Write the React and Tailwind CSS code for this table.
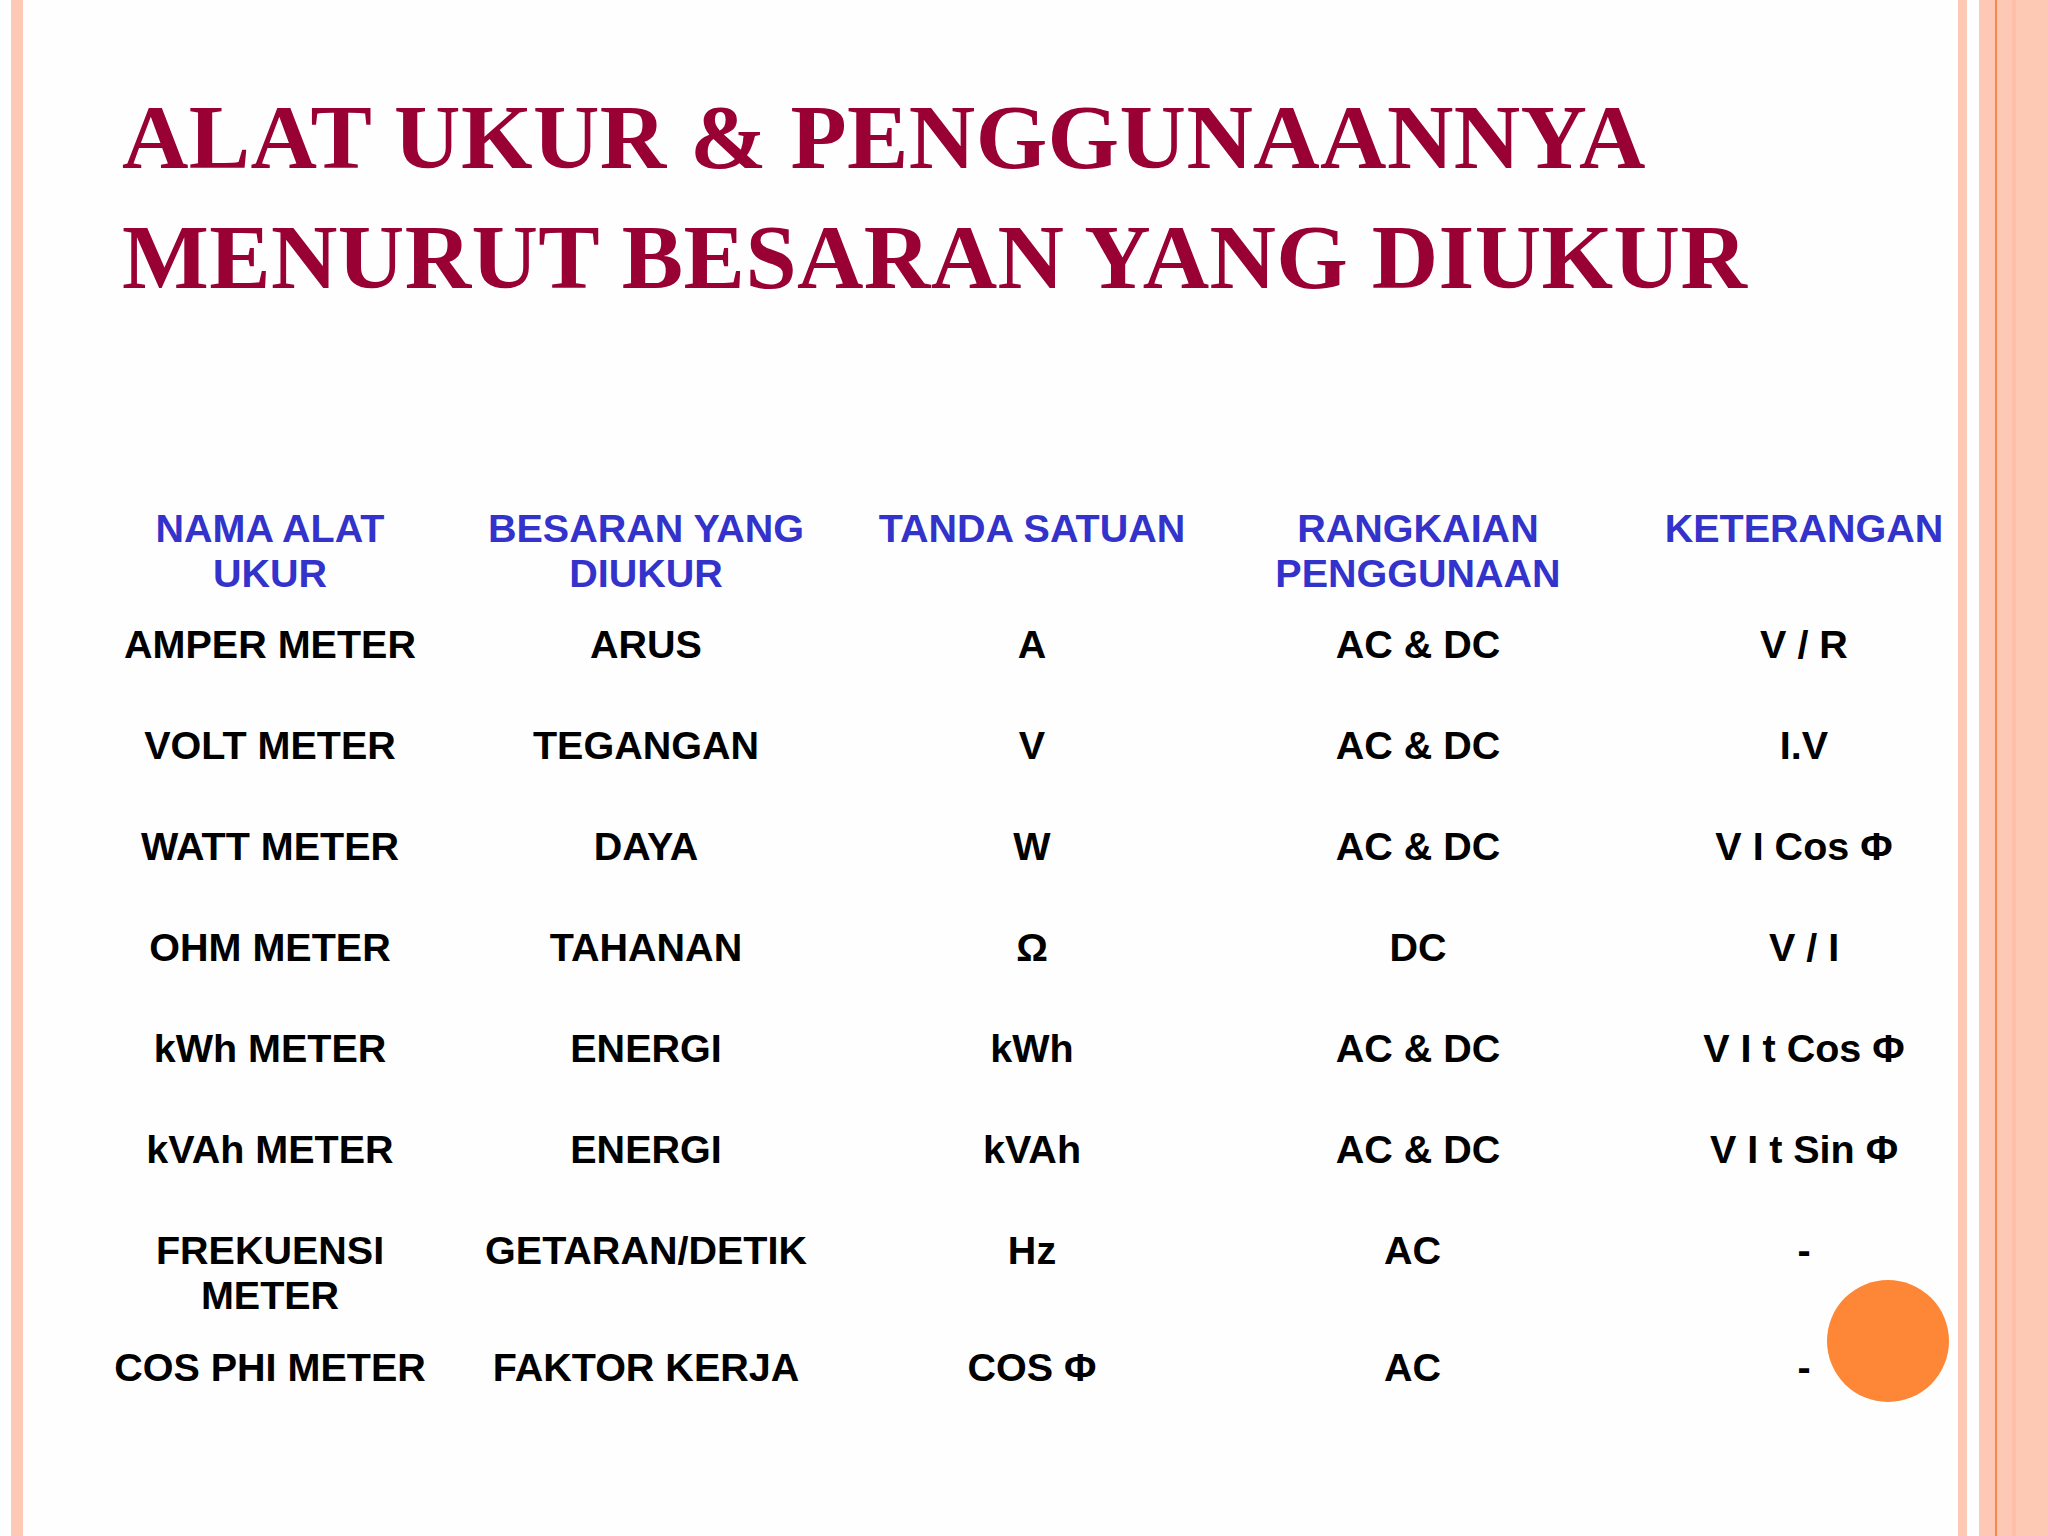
const rows = [
  ["AMPER METER", "ARUS", "A", "AC & DC", "V / R"],
  ["VOLT METER", "TEGANGAN", "V", "AC & DC", "I.V"],
  ["WATT METER", "DAYA", "W", "AC & DC", "V I Cos Φ"],
  ["OHM METER", "TAHANAN", "Ω", "DC", "V / I"],
  ["kWh METER", "ENERGI", "kWh", "AC & DC", "V I t Cos Φ"],
  ["kVAh METER", "ENERGI", "kVAh", "AC & DC", "V I t Sin Φ"],
]

function Cell({ children, className = "" }) {
  return <div className={`text-center whitespace-pre ${className}`}>{children}</div>
}

export default function App() {
  return (
    <div className="w-[2048px] h-[1536px] relative bg-[#fefefe] overflow-hidden flex">
      {/* left border stripe */}
      <div className="w-[11px] shrink-0" />
      <div className="w-[12px] shrink-0 bg-[#fdc9b5]" />

      {/* slide body */}
      <div className="flex-1 flex flex-col min-w-0">
        <h1 className="mt-[77px] ml-[99px] text-[92px] leading-[120px] tracking-[0.4px] font-bold text-[#990033] whitespace-pre font-['Liberation_Serif',serif]">
          {"ALAT UKUR & PENGGUNAANNYA\nMENURUT BESARAN YANG DIUKUR"}
        </h1>

        <div className="mt-[189px] ml-[59px] grid grid-cols-[376px_376px_396px_376px_396px] text-[39.5px] leading-[45px] font-bold font-['Liberation_Sans',Arial,sans-serif] text-black">
          <Cell className="h-[116px] text-[#3333cc]">{"NAMA ALAT\nUKUR"}</Cell>
          <Cell className="h-[116px] text-[#3333cc]">{"BESARAN YANG\nDIUKUR"}</Cell>
          <Cell className="h-[116px] text-[#3333cc]">TANDA SATUAN</Cell>
          <Cell className="h-[116px] text-[#3333cc]">{"RANGKAIAN\nPENGGUNAAN"}</Cell>
          <Cell className="h-[116px] text-[#3333cc]">KETERANGAN</Cell>

          {rows.map((r) =>
            r.map((c, j) => (
              <Cell key={r[0] + j} className="h-[101px]">
                {c}
              </Cell>
            ))
          )}

          <Cell className="h-[117px]">{"FREKUENSI\nMETER"}</Cell>
          <Cell className="h-[117px]">GETARAN/DETIK</Cell>
          <Cell className="h-[117px]">Hz</Cell>
          <Cell className="h-[117px]">{"AC\u00a0"}</Cell>
          <Cell className="h-[117px]">-</Cell>

          <Cell>COS PHI METER</Cell>
          <Cell>FAKTOR KERJA</Cell>
          <Cell>COS Φ</Cell>
          <Cell>{"AC\u00a0"}</Cell>
          <Cell>-</Cell>
        </div>
      </div>

      {/* right border stripes */}
      <div className="w-[9px] shrink-0 bg-[#fdc9b5]" />
      <div className="w-[12px] shrink-0" />
      <div className="w-[69px] shrink-0 flex bg-[#fdc9b5]">
        <div className="w-[16px]" />
        <div className="w-[2px] bg-[#f4874a]" />
        <div className="w-[15px]" />
        <div className="w-[4px] bg-[#fcbfa8]" />
      </div>

      {/* orange dot */}
      <div className="absolute left-[1827px] top-[1280px] w-[122px] h-[122px] rounded-full bg-[#fd8637]" />
    </div>
  )
}
